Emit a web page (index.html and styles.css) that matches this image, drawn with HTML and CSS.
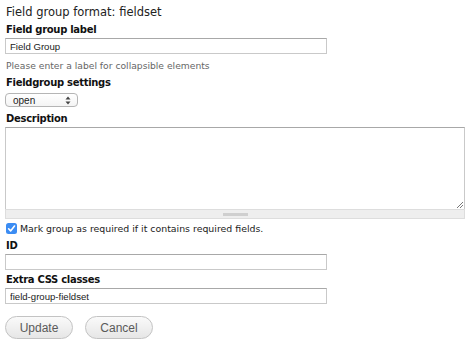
FILE: index.html
```html
<!DOCTYPE html>
<html>
<head>
<meta charset="utf-8">
<link rel="stylesheet" href="styles.css">
</head>
<body>
<form class="form">
  <div class="title">Field group format: fieldset</div>

  <div class="item">
    <label class="lbl">Field group label</label>
    <input class="text" type="text" value="Field Group">
    <div class="desc">Please enter a label for collapsible elements</div>
  </div>

  <div class="item">
    <label class="lbl">Fieldgroup settings</label>
    <div class="select">
      <span class="select-val">open</span>
      <svg class="arrows" width="6" height="9" viewBox="0 0 6 9"><path d="M3 0.5 L5.5 3.5 H0.5 Z M3 8.5 L5.5 5.5 H0.5 Z" fill="#444"/></svg>
    </div>
  </div>

  <div class="item">
    <label class="lbl lbl-area">Description</label>
    <div class="textarea-wrap">
      <textarea class="area"></textarea>
      <div class="grippie"><span class="grip"></span></div>
      <svg class="resize" width="7" height="7" viewBox="0 0 7 7"><path d="M1 7 L7 1 M4 7 L7 4" stroke="#777" stroke-width="1"/></svg>
    </div>
  </div>

  <div class="check-row">
    <svg class="check" width="11" height="11" viewBox="0 0 11 11"><rect x="0" y="0" width="11" height="11" rx="2.5" fill="#3b8cf3"/><path d="M2.6 5.8 L4.6 7.9 L8.5 3" stroke="#fff" stroke-width="1.6" fill="none" stroke-linecap="round" stroke-linejoin="round"/></svg>
    <span class="check-lbl">Mark group as required if it contains required fields.</span>
  </div>

  <div class="item">
    <label class="lbl">ID</label>
    <input class="text" type="text" value="">
  </div>

  <div class="item">
    <label class="lbl">Extra CSS classes</label>
    <input class="text" type="text" value="field-group-fieldset">
  </div>

  <div class="actions">
    <button class="btn" type="button">Update</button>
    <button class="btn" type="button">Cancel</button>
  </div>
</form>
</body>
</html>
```

FILE: styles.css
```css
html, body {
  margin: 0;
  padding: 0;
  background: #fff;
}
body {
  font-family: "DejaVu Sans", "Liberation Sans", sans-serif;
  color: #222;
  width: 474px;
  height: 346px;
  overflow: hidden;
}
.form {
  padding: 4px 9px 0 5px;
  display: flex;
  flex-direction: column;
}
.title {
  font-size: 11.5px;
  line-height: 16px;
  padding-left: 1px;
  color: #222;
}
.item {
  display: flex;
  flex-direction: column;
  align-items: flex-start;
}
.lbl {
  font-weight: bold;
  font-size: 10px;
  letter-spacing: -0.3px;
  line-height: 16px;
  padding-left: 1px;
  color: #111;
  margin-top: 2px;
}
.lbl-area {
  margin-top: 4px;
}
.text {
  box-sizing: border-box;
  width: 322px;
  height: 16px;
  margin: 0;
  padding: 0 4px;
  border: 1px solid #c9c9c9;
  border-top-color: #a8a8a8;
  border-radius: 0;
  font-family: "Liberation Sans", Arial, sans-serif;
  font-size: 9.6px;
  color: #222;
  background: #fff;
  outline: none;
}
.desc {
  font-size: 9.2px;
  line-height: 14px;
  color: #666;
  margin-top: 5px;
  padding-left: 1px;
}
.select {
  box-sizing: border-box;
  width: 73px;
  height: 14px;
  margin-top: 2px;
  border: 1px solid #b5b5b5;
  border-radius: 4px;
  display: flex;
  align-items: center;
  justify-content: space-between;
  padding: 0 6px 0 7px;
  font-family: "Liberation Sans", Arial, sans-serif;
  font-size: 10px;
  color: #222;
  background: linear-gradient(#fff, #f4f4f4);
}
.arrows {
  display: block;
}
.textarea-wrap {
  position: relative;
  width: 460px;
}
.area {
  display: block;
  box-sizing: border-box;
  width: 460px;
  height: 82px;
  margin: 0;
  border: 1px solid #c9c9c9;
  border-top-color: #a8a8a8;
  border-bottom: 0;
  resize: none;
  outline: none;
  background: #fff;
}
.grippie {
  box-sizing: border-box;
  height: 10px;
  background: #eeeeee;
  border: 1px solid #dddddd;
  display: flex;
  justify-content: center;
  align-items: center;
}
.grip {
  display: block;
  width: 25px;
  height: 3px;
  background: #cfcfcf;
}
.resize {
  position: absolute;
  right: 2px;
  bottom: 11px;
}
.check-row {
  display: flex;
  align-items: center;
  gap: 3px;
  margin-top: 3px;
  margin-bottom: 1px;
  padding-left: 1px;
  height: 13px;
}
.check {
  display: block;
}
.check-lbl {
  font-size: 9.4px;
  color: #222;
}
.actions {
  display: flex;
  gap: 12px;
  margin-top: 12px;
}
.btn {
  box-sizing: border-box;
  width: 68px;
  height: 23px;
  border: 1px solid #c3c3c3;
  border-radius: 12px;
  background: linear-gradient(#fafafa, #e6e6e6);
  font-family: "Liberation Sans", Arial, sans-serif;
  font-size: 12px;
  color: #5a5a5a;
  padding: 0;
  margin: 0;
}
```
